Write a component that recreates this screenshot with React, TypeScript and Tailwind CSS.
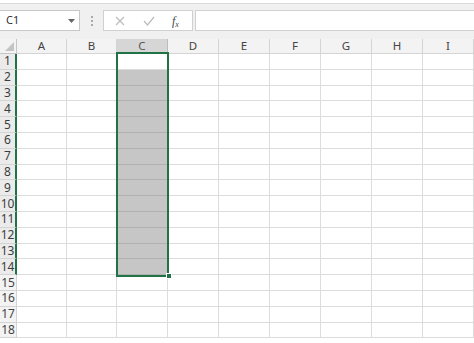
import React from 'react';

const cols = ['A', 'B', 'C', 'D', 'E', 'F', 'G', 'H', 'I'];
const rows = Array.from({ length: 18 }, (_, i) => i + 1);

export default function App() {
    return (
        <div className="relative h-[343px] w-[474px] overflow-hidden bg-white font-['Noto_Sans',sans-serif] text-[#444]">
            {/* formula bar */}
            <div className="h-[36px] border-t border-[#d9d9d9] bg-[#f0f0f0] mt-[3px] pt-[6px] flex items-start">
                <div className="flex h-[21px] w-[80px] items-center justify-between border border-l-0 border-[#c8c8c8] bg-white pl-[6px] pr-[4px] text-[11px] text-[#333]">
                    <span>C1</span>
                    <svg width="7" height="4" viewBox="0 0 7 4">
                        <path d="M0 0h7L3.5 4z" fill="#666" />
                    </svg>
                </div>
                <div className="ml-[11px] mt-[6px] flex flex-col gap-[2px]">
                    <span className="h-[2px] w-[2px] bg-[#aaa]" />
                    <span className="h-[2px] w-[2px] bg-[#aaa]" />
                    <span className="h-[2px] w-[2px] bg-[#aaa]" />
                </div>
                <div className="ml-[10px] flex h-[21px] w-[90px] items-center border border-[#d0d0d0] bg-white">
                    <svg className="ml-[11px]" width="10" height="10" viewBox="0 0 10 10">
                        <path d="M1 1l8 8M9 1l-8 8" stroke="#bbb" strokeWidth="1.2" />
                    </svg>
                    <svg className="ml-[18px]" width="12" height="10" viewBox="0 0 12 10">
                        <path d="M1 5l3.5 4L11 1" stroke="#bbb" strokeWidth="1.2" fill="none" />
                    </svg>
                    <span className="ml-[17px] font-['Liberation_Serif',serif] text-[12px] italic text-[#444]">
                        f<sub className="text-[8px]">x</sub>
                    </span>
                </div>
                <div className="ml-[2px] h-[21px] flex-1 border border-r-0 border-[#d0d0d0] bg-white" />
            </div>

            {/* sheet grid */}
            <div className="grid grid-cols-[17px_50px_50px_51px_51px_51px_51px_51px_51px_1fr] grid-rows-[15px_repeat(18,15.8px)]">
                <div className="relative border-b border-r border-[#c6c6c6] bg-[#f3f3f3]">
                    <svg className="absolute bottom-[2px] right-[2px]" width="9" height="9" viewBox="0 0 9 9">
                        <path d="M9 0v9H0z" fill="#c4c4c4" />
                    </svg>
                </div>
                {cols.map((c) => (
                    <div
                        key={c}
                        className={
                            c === 'C'
                                ? 'flex items-center justify-center border-b border-r border-[#bdbdbd] bg-[#d6d6d6] text-[11.5px] text-[#555]'
                                : 'flex items-center justify-center border-b border-r border-[#d4d4d4] bg-[#f3f3f3] text-[11.5px] text-[#444]'
                        }
                    >
                        {c}
                    </div>
                ))}
                {rows.map((r) => (
                    <React.Fragment key={r}>
                        <div
                            className={
                                r <= 14
                                    ? 'flex items-center justify-center border-b border-r-2 border-b-[#d4d4d4] border-r-[#217346] bg-[#ebebeb] text-[12px] leading-none text-[#3d3d3d]'
                                    : 'flex items-center justify-center border-b border-r border-[#d4d4d4] bg-[#f3f3f3] text-[12px] leading-none text-[#444]'
                            }
                        >
                            {r}
                        </div>
                        {cols.map((c) => (
                            <div
                                key={c}
                                className={
                                    c === 'C' && r >= 2 && r <= 14
                                        ? 'border-b border-r border-[#b0b0b0] bg-[#c6c6c6]'
                                        : 'border-b border-r border-[#dcdcdc]'
                                }
                            />
                        ))}
                    </React.Fragment>
                ))}
            </div>

            {/* selection outline */}
            <div className="pointer-events-none absolute left-[116px] top-[52px] h-[225px] w-[53px] border-2 border-[#217346]" />
            <div className="absolute left-[166px] top-[273px] h-[6px] w-[6px] border border-white bg-[#217346]" />
        </div>
    );
}
